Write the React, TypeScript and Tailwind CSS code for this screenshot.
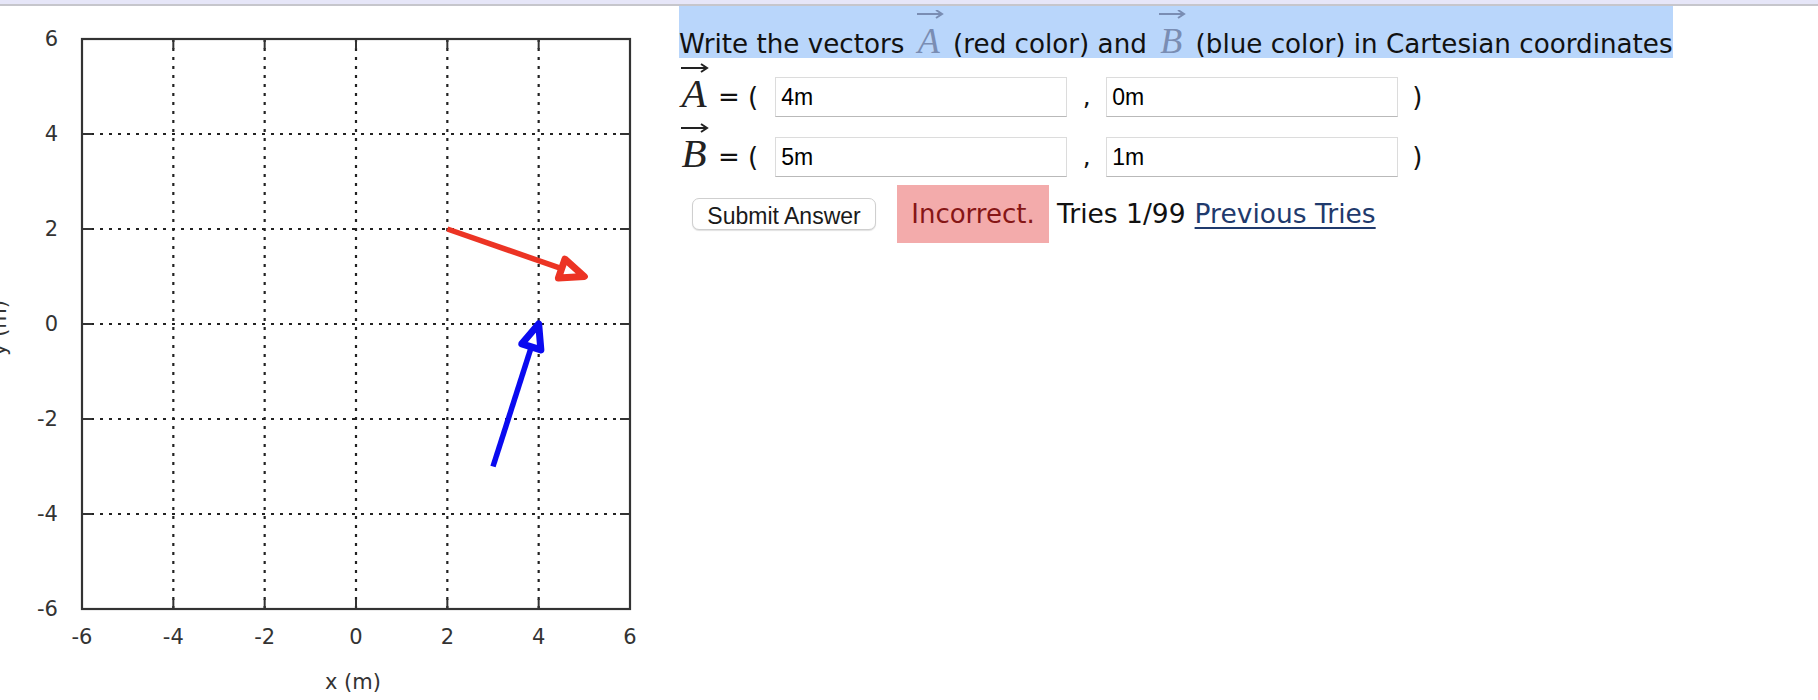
import React from 'react';

// plot geometry (svg coords, svg starts 6px below the page top)
const X = (v: number) => 82 + (v + 6) * (548 / 12);
const Y = (v: number) => 33 + (6 - v) * 47.5;
const TICKS = [-6, -4, -2, 0, 2, 4, 6];
const GRID = [-4, -2, 0, 2, 4];

interface ArrowProps {
  x1: number;
  y1: number;
  x2: number;
  y2: number;
  color: string;
}

const Arrow = ({ x1, y1, x2, y2, color }: ArrowProps) => {
  const dx = x2 - x1;
  const dy = y2 - y1;
  const len = Math.hypot(dx, dy);
  const ux = dx / len;
  const uy = dy / len;
  const nx = -uy;
  const ny = ux;
  const L = 24;
  const W = 10;
  const bx = x2 - ux * L;
  const by = y2 - uy * L;
  const pts = `${x2},${y2} ${bx + nx * W},${by + ny * W} ${bx - nx * W},${by - ny * W}`;
  return (
    <g>
      <line x1={x1} y1={y1} x2={bx} y2={by} stroke={color} strokeWidth={5.5} />
      <polygon points={pts} fill="#fff" stroke={color} strokeWidth={7} strokeLinejoin="round" />
    </g>
  );
};

const Plot = () => (
  <svg width={679} height={694} className="block shrink-0">
    {/* dotted grid */}
    {GRID.map((v) => (
      <line key={`gx${v}`} x1={X(v)} y1={Y(6)} x2={X(v)} y2={Y(-6)} stroke="#222" strokeWidth={2.2} strokeDasharray="3 6" />
    ))}
    {GRID.map((v) => (
      <line key={`gy${v}`} x1={X(-6)} y1={Y(v)} x2={X(6)} y2={Y(v)} stroke="#222" strokeWidth={2.2} strokeDasharray="3 6" />
    ))}
    {/* ticks, mirrored on all sides */}
    {GRID.map((v) => (
      <g key={`t${v}`} stroke="#333" strokeWidth={2}>
        <line x1={X(v)} y1={Y(-6)} x2={X(v)} y2={Y(-6) - 10} />
        <line x1={X(v)} y1={Y(6)} x2={X(v)} y2={Y(6) + 10} />
        <line x1={X(-6)} y1={Y(v)} x2={X(-6) + 10} y2={Y(v)} />
        <line x1={X(6)} y1={Y(v)} x2={X(6) - 10} y2={Y(v)} />
      </g>
    ))}
    <rect x={X(-6)} y={Y(6)} width={X(6) - X(-6)} height={Y(-6) - Y(6)} fill="none" stroke="#333" strokeWidth={2.2} />
    {/* tick labels */}
    <g fontFamily="'DejaVu Sans', sans-serif" fontSize={21} fill="#333">
      {TICKS.map((v) => (
        <text key={`ly${v}`} x={58} y={Y(v)} textAnchor="end" dominantBaseline="central">
          {v}
        </text>
      ))}
      {TICKS.map((v) => (
        <text key={`lx${v}`} x={X(v)} y={631} textAnchor="middle" dominantBaseline="central">
          {v}
        </text>
      ))}
      <text x={353} y={676} textAnchor="middle" dominantBaseline="central">
        x (m)
      </text>
      <text x={6} y={322} textAnchor="middle" transform="rotate(-90 6 322)">
        y (m)
      </text>
    </g>
    <Arrow x1={X(2)} y1={Y(2)} x2={X(5)} y2={Y(1)} color="#ec3424" />
    <Arrow x1={X(3)} y1={Y(-3)} x2={X(4)} y2={Y(0)} color="#0a0af0" />
  </svg>
);

interface VecProps {
  letter: string;
  size: 'head' | 'row';
}

// MathJax-like vector symbol: italic serif letter with an arrow above
const Vec = ({ letter, size }: VecProps) => {
  if (size === 'head') {
    return (
      <span className="inline-block align-baseline text-center text-[#7a8db3]">
        <svg width={32} height={13} className="block mx-auto">
          <g stroke="#7a8db3" strokeWidth={2} fill="none">
            <line x1={4} y1={4} x2={29} y2={4} />
            <polyline points="23,0 29,4 23,8" />
          </g>
        </svg>
        <span className="block font-['Liberation_Serif',serif] italic text-[36px] leading-none">{letter}</span>
      </span>
    );
  }
  return (
    <span className="flex flex-col items-center self-end mb-[3px] text-[#222] w-[30px]">
      <svg width={29} height={10} className="block">
        <g stroke="#222" strokeWidth={2} fill="none">
          <line x1={1} y1={5} x2={27} y2={5} />
          <polyline points="21,1 27,5 21,9" />
        </g>
      </svg>
      <span className="block font-['Liberation_Serif',serif] italic text-[41px] leading-none">{letter}</span>
    </span>
  );
};

const Field = ({ value }: { value: string }) => (
  <input
    readOnly
    value={value}
    className="w-[292px] h-[40px] px-[5px] border border-[#dcdcdc] border-b-[#b9b9b9] bg-white text-[23px] text-black font-['Liberation_Sans',sans-serif] outline-none"
  />
);

const Row = ({ letter, a, b, first }: { letter: string; a: string; b: string; first?: boolean }) => (
  <div className={`flex items-center h-[40px] ${first ? 'mt-[19px]' : 'mt-[20px]'}`}>
    <span className="flex self-end">
      <Vec letter={letter} size="row" />
    </span>
    <span className="ml-[9px] text-[26px]">= (</span>
    <span className="ml-[17px] flex">
      <Field value={a} />
    </span>
    <span className="w-[39px] text-center text-[25px]">,</span>
    <Field value={b} />
    <span className="ml-[14px] text-[26px]">)</span>
  </div>
);

export default function App() {
  return (
    <div className="w-[1818px] h-[700px] bg-white overflow-hidden font-['DejaVu_Sans',sans-serif] text-[#111]">
      <div className="h-[4px] bg-[#e6e6f8]" />
      <div className="h-[2px] bg-[#c6c6cc]" />
      <div className="flex">
        <Plot />
        <div className="flex flex-col">
          <div className="self-start h-[52px] pt-[4px] bg-[#b9d6fb] whitespace-nowrap text-[26.2px] leading-[30px]">
            Write the vectors <Vec letter="A" size="head" /> (red color) and <Vec letter="B" size="head" /> (blue color) in
            Cartesian coordinates
          </div>
          <Row letter="A" a="4m" b="0m" first />
          <Row letter="B" a="5m" b="1m" />
          <div className="flex items-center h-[58px] mt-[8px]">
            <button className="ml-[13px] w-[184px] h-[32px] rounded-[7px] border border-[#cfcfcf] bg-white shadow-[0_1px_1px_rgba(0,0,0,0.12)] text-[23px] text-[#1a1a1a] font-['Liberation_Sans',sans-serif]">
              Submit Answer
            </button>
            <div className="ml-[21px] w-[152px] h-[58px] flex items-center justify-center bg-[#f3abab] text-[#861616] text-[26px]">
              Incorrect.
            </div>
            <span className="ml-[8px] text-[26.5px] text-[#111]">Tries 1/99</span>
            <a href="#" className="ml-[9px] text-[26.5px] text-[#1f3a6d] underline underline-offset-[4px]">
              Previous Tries
            </a>
          </div>
        </div>
      </div>
    </div>
  );
}
